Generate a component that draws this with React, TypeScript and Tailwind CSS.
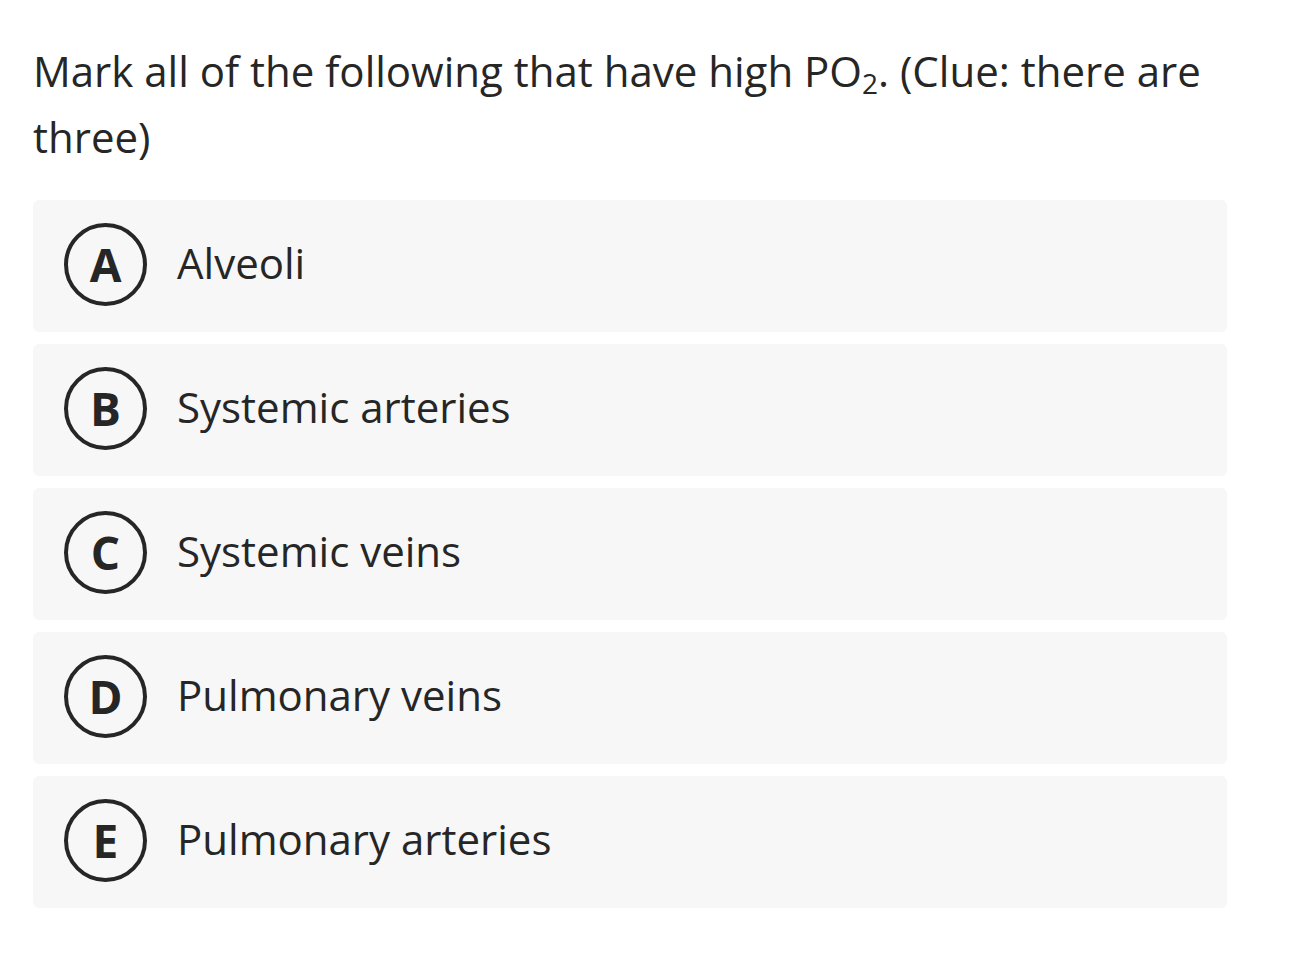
import React from "react";

const options = [
  { letter: "A", label: "Alveoli" },
  { letter: "B", label: "Systemic arteries" },
  { letter: "C", label: "Systemic veins" },
  { letter: "D", label: "Pulmonary veins" },
  { letter: "E", label: "Pulmonary arteries" },
];

export default function App() {
  return (
    <div className="min-h-screen bg-white text-[#262626] font-['Open_Sans',sans-serif]">
      <div className="w-[1194px] ml-[33px] pt-[38px]">
        <p className="text-[42px] leading-[66px] pr-[20px]">
          Mark all of the following that have high PO<sub className="text-[28px]">2</sub>. (Clue: there are three)
        </p>
        <div className="mt-[30px] flex flex-col gap-[12px]">
          {options.map((o) => (
            <div key={o.letter} className="h-[132px] rounded-[6px] bg-[#f7f7f7] flex items-center pl-[31px] pb-[4px]">
              <div className="w-[83px] h-[83px] rounded-full border-[4.5px] border-[#262626] flex items-center justify-center shrink-0">
                <span className="text-[46px] font-bold leading-none">{o.letter}</span>
              </div>
              <span className="ml-[30px] text-[42px] leading-none mb-[2px]">{o.label}</span>
            </div>
          ))}
        </div>
      </div>
    </div>
  );
}
